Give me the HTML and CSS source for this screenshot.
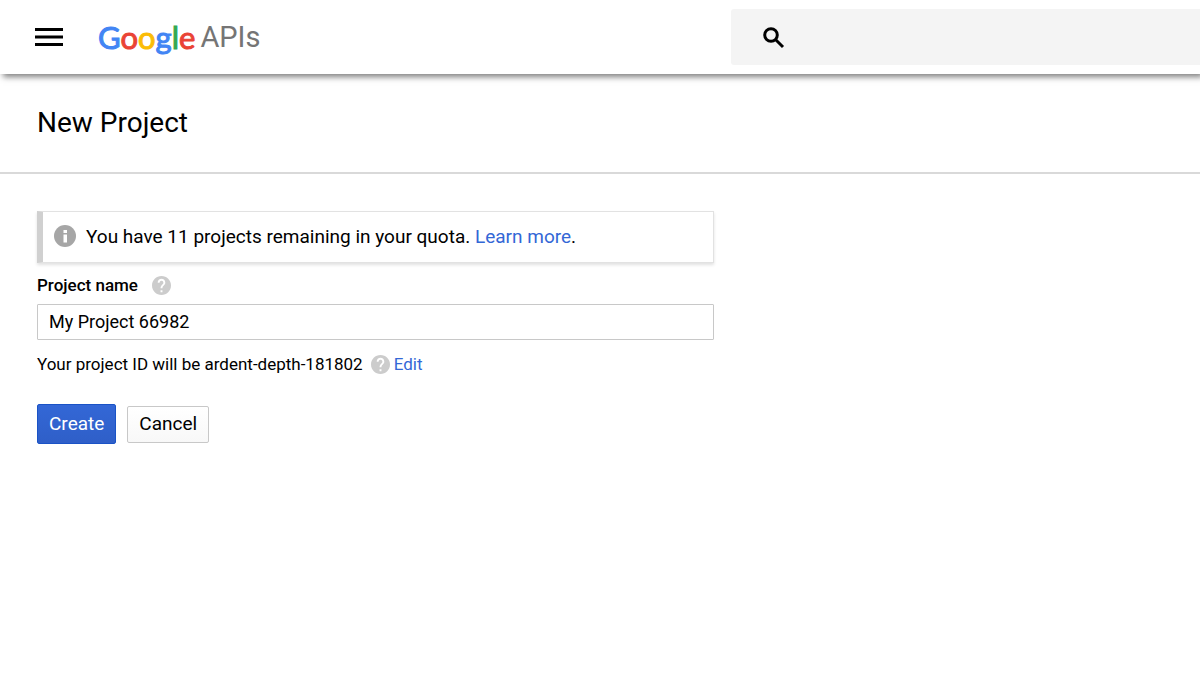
FILE: index.html
```html
<!DOCTYPE html>
<html lang="en">

<head>
  <meta charset="UTF-8">
  <meta name="viewport" content="width=device-width, initial-scale=1.0">
  <title>New Project - Google APIs</title>
  <link rel="stylesheet" href="styles.css">
</head>

<body>
  <header class="topbar">
    <div class="brand">
      <button type="button" class="menu-button" aria-label="Menu">
        <svg width="28" height="20" viewBox="0 0 28 20">
          <path d="M0 1h28v3H0zM0 8.500h28v3H0zM0 16h28v3H0z" />
        </svg>
      </button>
      <a href="#" class="logo">
        <span class="google"><span class="blue">G</span><span class="red">o</span><span class="yellow">o</span><span class="blue">g</span><span class="green">l</span><span class="red">e</span></span>
        <span class="apis">APIs</span>
      </a>
    </div>
    <form class="search">
      <svg width="22" height="24" viewBox="0 -2 22 24" fill="none" stroke="#000" stroke-width="3">
        <circle cx="8" cy="8" r="6.300" />
        <path d="M12 12l8 8" />
      </svg>
      <input type="text" class="search-input" aria-label="Search">
    </form>
  </header>

  <div class="page-title">
    <h1>New Project</h1>
  </div>

  <main>
    <form class="project-form">
      <div class="notice">
        <svg class="info-icon" width="22" height="22" viewBox="0 0 22 22">
          <circle cx="11" cy="11" r="11" fill="#a6a6a6" />
          <path d="M9.500 5h3.500v3H9.500zM9.500 9.500h3.500v8H9.500z" fill="#fff" />
        </svg>
        <p>You have 11 projects remaining in your quota. <a href="#">Learn more</a>.</p>
      </div>

      <div class="label-row">
        <label for="project-name">Project name</label>
        <svg class="help-icon" width="19" height="19" viewBox="2 2 20 20">
          <path d="M12 2C6.480 2 2 6.480 2 12s4.480 10 10 10 10-4.480 10-10S17.520 2 12 2zm1 17h-2v-2h2v2zm2.070-7.750l-.9.920C13.450 12.900 13 13.500 13 15h-2v-.5c0-1.100.45-2.100 1.170-2.830l1.240-1.260c.37-.36.590-.86.590-1.410 0-1.100-.9-2-2-2s-2 .9-2 2H8c0-2.210 1.790-4 4-4s4 1.790 4 4c0 .88-.36 1.680-.93 2.250z" />
        </svg>
      </div>
      <input type="text" id="project-name" class="text-input" value="My Project 66982">

      <div class="id-row">
        <span>Your project ID will be ardent-depth-181802</span>
        <svg class="help-icon" width="19" height="19" viewBox="2 2 20 20">
          <path d="M12 2C6.480 2 2 6.480 2 12s4.480 10 10 10 10-4.480 10-10S17.520 2 12 2zm1 17h-2v-2h2v2zm2.070-7.750l-.9.920C13.450 12.900 13 13.500 13 15h-2v-.5c0-1.100.45-2.100 1.170-2.830l1.240-1.260c.37-.36.590-.86.590-1.410 0-1.100-.9-2-2-2s-2 .9-2 2H8c0-2.210 1.790-4 4-4s4 1.790 4 4c0 .88-.36 1.680-.93 2.250z" />
        </svg>
        <a href="#">Edit</a>
      </div>

      <div class="buttons">
        <button type="submit" class="btn btn-primary">Create</button>
        <button type="button" class="btn btn-default">Cancel</button>
      </div>
    </form>
  </main>
</body>

</html>
```
FILE: styles.css
```css
* {
  box-sizing: border-box;
}

body {
  margin: 0;
  font-family: Roboto, Arial, sans-serif;
  font-size: 19px;
  color: #000;
  background-color: #fff;
}

a {
  color: #3367d6;
  text-decoration: none;
}

.topbar {
  display: flex;
  justify-content: space-between;
  align-items: center;
  height: 74px;
  box-shadow: 3px 3px 6px rgba(0, 0, 0, 0.5);
}

.brand {
  display: flex;
  align-items: center;
  gap: 35px;
  padding-left: 35px;
}

.menu-button {
  display: flex;
  padding: 0;
  border: none;
  background: none;
}

.logo {
  display: flex;
  align-items: center;
  gap: 5px;
}

.google {
  font-family: Lato, sans-serif;
  font-size: 31px;
  line-height: 40px;
  -webkit-text-stroke: 1px;
}

.apis {
  font-size: 29px;
  line-height: 36px;
  color: #757575;
}

.blue {
  color: #4285f4;
}

.red {
  color: #ea4335;
}

.yellow {
  color: #fbbc05;
}

.green {
  color: #34a853;
}

.search {
  display: flex;
  align-items: center;
  gap: 20px;
  width: 39.1%;
  height: 56px;
  padding-left: 32px;
  border-radius: 3px 0 0 3px;
  background-color: #f4f4f4;
}

.search-input {
  flex: 1;
  min-width: 0;
  border: none;
  outline: none;
  background: none;
  font: inherit;
}

.page-title {
  padding: 32px 37px;
  border-bottom: 2px solid #d9d9d9;
}

.page-title h1 {
  margin: 0;
  font-size: 28px;
  font-weight: 400;
  line-height: 34px;
}

main {
  padding: 37px;
}

.project-form {
  max-width: 677px;
}

.notice {
  display: flex;
  align-items: flex-start;
  gap: 10px;
  padding: 13px 11px;
  border: 1px solid #e2e2e2;
  border-left: 6px solid #d0d0d0;
  box-shadow: 0 2px 3px rgba(0, 0, 0, 0.12);
  line-height: 24px;
}

.notice p {
  margin: 0;
}

.label-row,
.id-row {
  display: flex;
  align-items: center;
  font-size: 17px;
  line-height: 20px;
}

.label-row {
  gap: 14px;
  margin: 12px 0 9px;
  font-weight: 500;
}

.help-icon {
  fill: #ccc;
}

.text-input {
  display: block;
  width: 100%;
  height: 36px;
  padding: 0 11px 2px;
  border: 1px solid #c8c8c8;
  border-radius: 1px;
  font: inherit;
  font-size: 18px;
  color: #000;
}

.id-row {
  margin: 14px 0 30px;
}

.id-row .help-icon {
  margin: 0 4px 0 8px;
}

.buttons {
  display: flex;
  align-items: center;
  gap: 11px;
}

.btn {
  padding: 0 11px 1px;
  border-radius: 2px;
  font: inherit;
}

.btn-primary {
  height: 40px;
  border: 1px solid #1a53c6;
  background: linear-gradient(#3367d6, #2f5fc8);
  color: #fff;
}

.btn-default {
  height: 37px;
  border: 1px solid #c8c8c8;
  background: linear-gradient(#fff, #f8f8f8);
  color: #000;
}
```
